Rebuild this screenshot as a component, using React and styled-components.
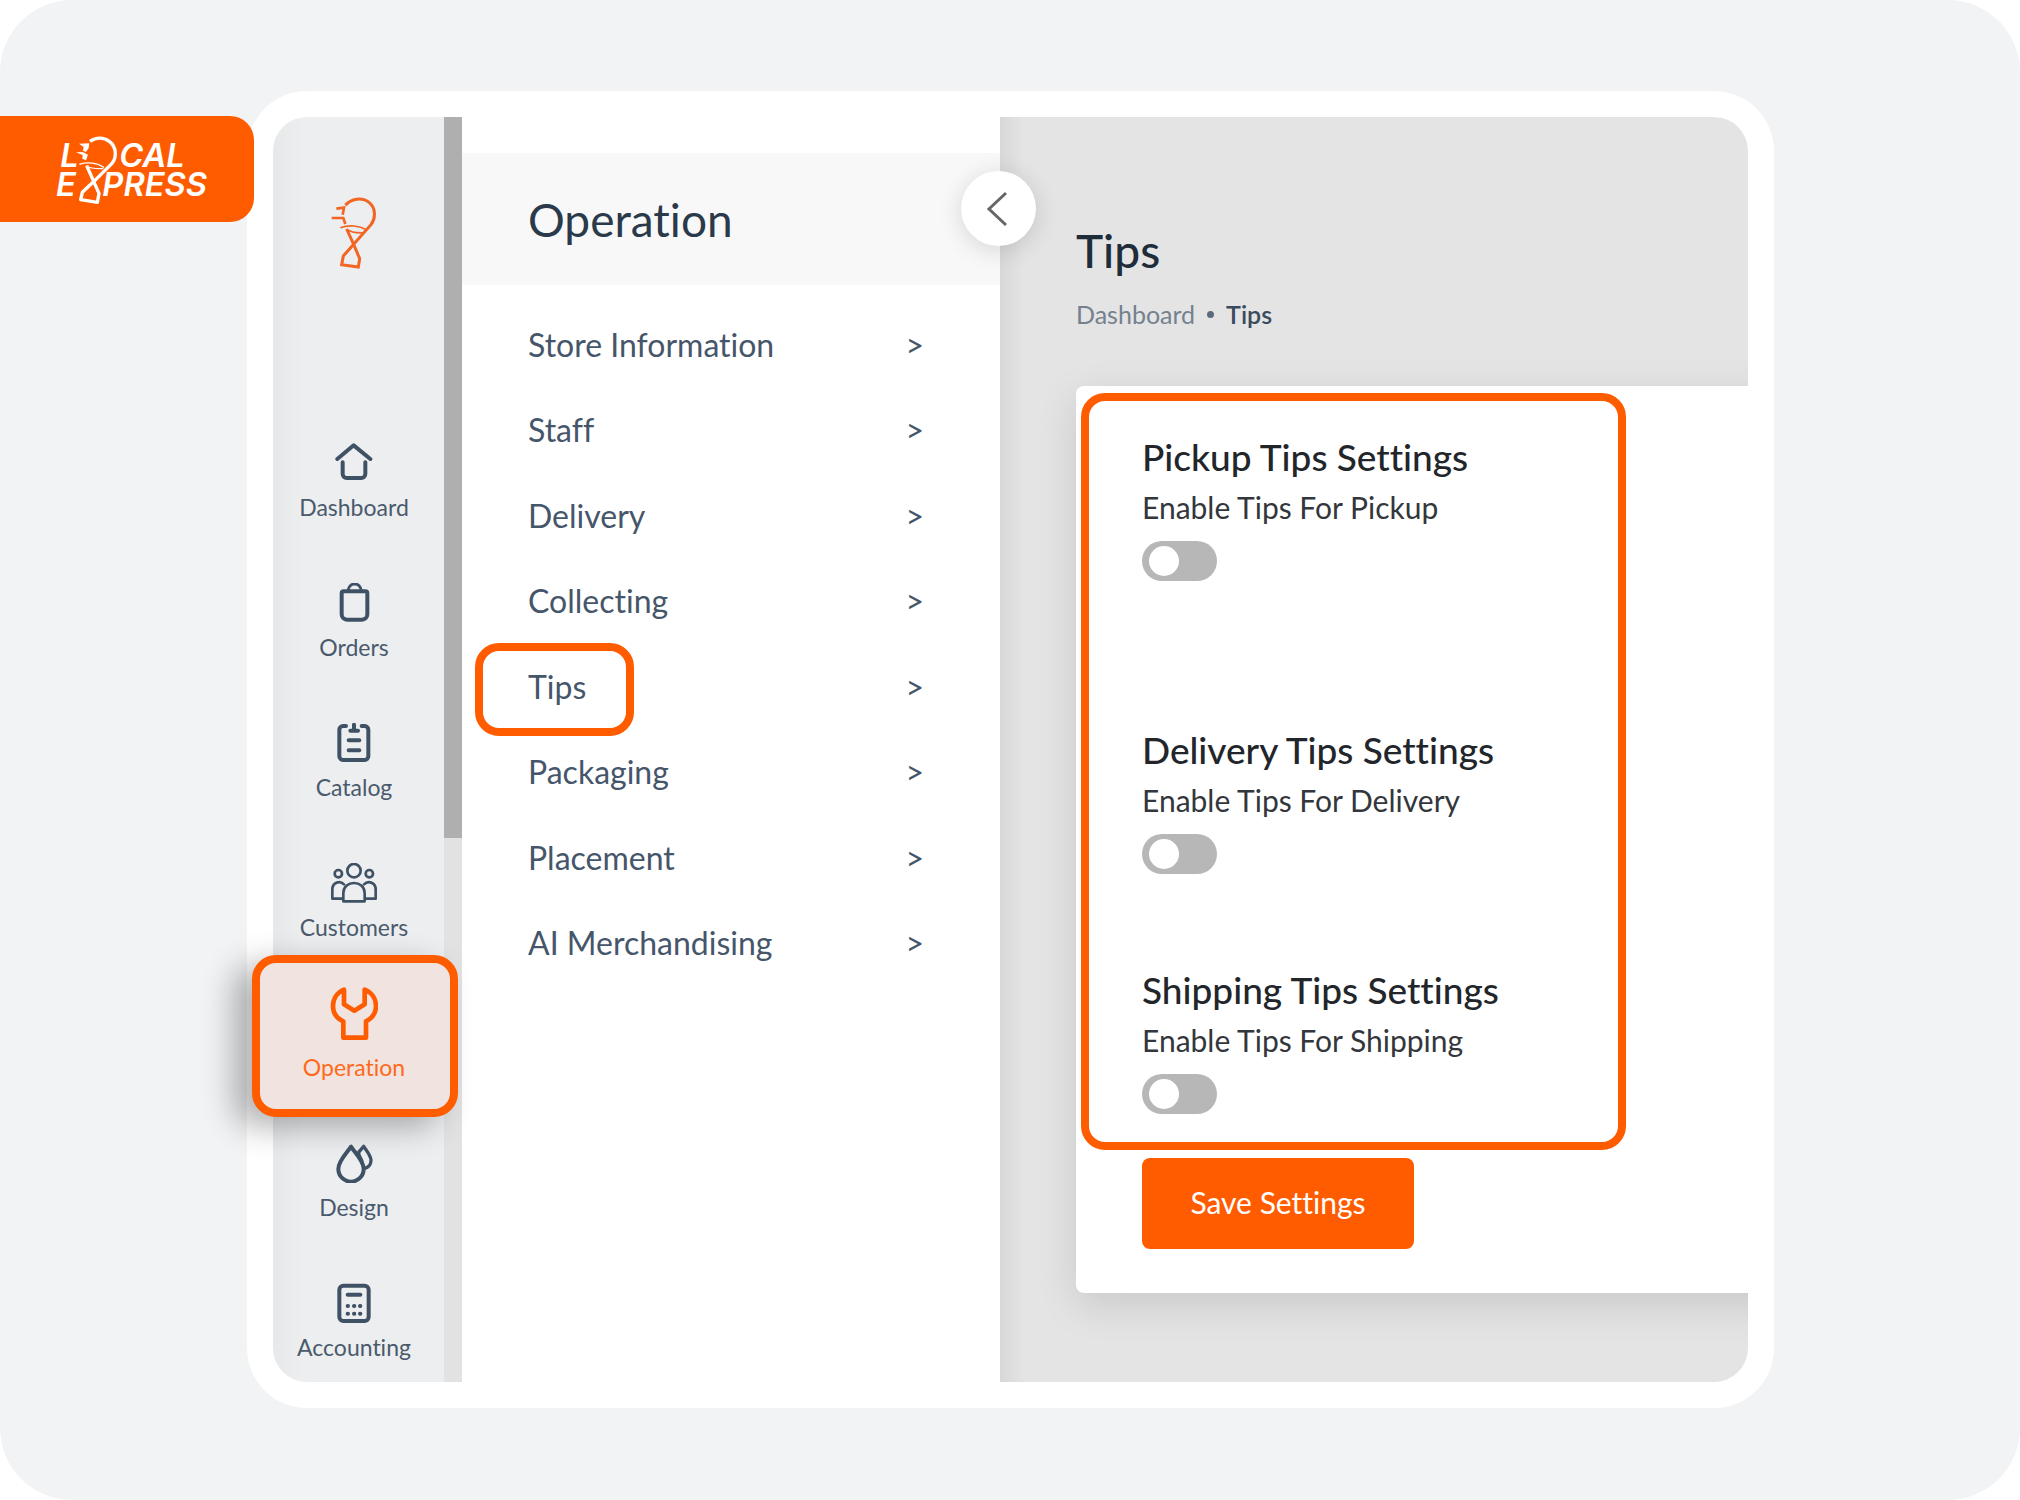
import React, { useState } from 'react';
import styled, { createGlobalStyle } from 'styled-components';

const GlobalStyle = createGlobalStyle`
  * {
    box-sizing: border-box;
  }

  body {
    margin: 0;
    background: white;
    font-family: Lato, 'Open Sans', sans-serif;
    font-variant-ligatures: none;
  }
`;

const Stage = styled.div`
  position: relative;
  min-height: 100vh;
  padding: 91px 246px 91px 247px;
  background: #f2f3f5;
  border-radius: 72px;
`;

const BrandTag = styled.div`
  position: absolute;
  top: 116px;
  left: 0;
  z-index: 3;
  width: 254px;
  height: 106px;
  background: #ff5c00;
  border-radius: 0 24px 24px 0;

  svg {
    display: block;
  }
`;

const Frame = styled.main`
  display: flex;
  padding: 26px;
  background: white;
  border-radius: 60px;
`;

const Rail = styled.nav`
  position: relative;
  z-index: 2;
  flex: 0 0 171px;
  padding: 80px 9px 0 0;
  background: linear-gradient(to right, #e6e8e9, #edeef0 30px);
  border-radius: 34px 0 0 34px;
`;

const RailLogo = styled.a`
  display: flex;
  justify-content: center;
  height: 220px;
`;

const RailItem = styled.a`
  position: relative;
  display: flex;
  flex-direction: column;
  align-items: center;
  height: 140px;
  font-size: 23px;
  line-height: 28px;
  text-decoration: none;
  color: ${props => props.$active ? '#ff6a1a' : '#4a5a6c'};

  &:last-child {
    height: 120px;
  }

  ${props => props.$active && `
    &::before {
      content: '';
      position: absolute;
      inset: -22px -23px 0 -21px;
      background: #f1e3e0;
      border: 8px solid #ff5c00;
      border-radius: 24px;
      box-shadow: -18px 10px 32px rgba(0, 0, 0, 0.3);
    }
  `}
`;

const RailIcon = styled.span`
  position: relative;
  display: flex;
  align-items: flex-end;
  height: 66px;
  margin-bottom: 10px;

  svg {
    fill: none;
    stroke: ${props => props.$active ? '#ff5c00' : '#3f5165'};
    stroke-width: 12;
    stroke-linecap: round;
    stroke-linejoin: round;
  }
`;

const RailLabel = styled.span`
  position: relative;
`;

const ScrollTrack = styled.div`
  flex: 0 0 18px;
  background: #e2e2e2;
`;

const ScrollThumb = styled.div`
  height: 57%;
  background: #afafaf;
`;

const Panel = styled.section`
  position: relative;
  z-index: 1;
  flex: 0 0 538px;
  padding-top: 36px;
  background: white;
`;

const PanelHeader = styled.header`
  display: flex;
  align-items: center;
  height: 132px;
  padding: 0 66px;
  background: #f8f8f8;
`;

const PanelTitle = styled.h2`
  margin: 0;
  font-size: 46px;
  font-weight: 400;
  color: #2b3a4a;
`;

const CollapseButton = styled.button`
  position: absolute;
  top: 54px;
  right: -36px;
  display: flex;
  align-items: center;
  justify-content: center;
  width: 75px;
  height: 75px;
  padding: 0 4px 0 0;
  background: white;
  border: none;
  border-radius: 50%;
  box-shadow: 0 4px 24px rgba(0, 0, 0, 0.14);
  cursor: pointer;
`;

const Menu = styled.div`
  display: grid;
  grid-auto-rows: 1fr;
  min-height: 684px;
  margin-top: 17px;
`;

const MenuItem = styled.a`
  display: flex;
  align-items: center;
  justify-content: space-between;
  padding: 0 76px 0 66px;
  font-size: 32px;
  line-height: 36px;
  color: #46566a;
  text-decoration: none;
`;

const MenuLabel = styled.span`
  position: relative;

  ${props => props.$marked && `
    &::after {
      content: '';
      position: absolute;
      inset: -26px -48px -31px -53px;
      border: 8px solid #ff5c00;
      border-radius: 24px;
    }
  `}
`;

const Content = styled.section`
  flex: 1;
  min-width: 0;
  padding: 106px 0 89px 76px;
  overflow: hidden;
  background: linear-gradient(to right, #d8d8d8, #e4e4e4 24px);
  border-radius: 0 34px 34px 0;
`;

const PageTitle = styled.h1`
  margin: 0;
  font-size: 46px;
  font-weight: 500;
  line-height: 56px;
  color: #1f2c3a;
`;

const Breadcrumb = styled.div`
  display: flex;
  align-items: center;
  gap: 12px;
  margin: 19px 0 56px;
  font-size: 25px;
  line-height: 32px;
  color: #3b4b5e;

  a {
    color: #74818e;
    text-decoration: none;
  }

  strong {
    font-weight: 600;
  }
`;

const Dot = styled.span`
  width: 7px;
  height: 7px;
  background: #5c6b7a;
  border-radius: 50%;
`;

/* runs past the right edge, where the content area cuts it off */
const Card = styled.form`
  margin-right: -60px;
  padding: 7px 65px 44px 5px;
  background: white;
  border-radius: 8px;
  box-shadow: 0 12px 40px rgba(0, 0, 0, 0.12);
`;

const SettingsBox = styled.div`
  width: 545px;
  max-width: 100%;
  padding: 34px 53px 28px;
  border: 8px solid #ff5c00;
  border-radius: 24px;
`;

const Setting = styled.div`
  height: ${props => props.$height}px;
`;

const SettingTitle = styled.h3`
  margin: 0 0 10px;
  font-size: 37px;
  font-weight: 500;
  line-height: 44px;
  white-space: nowrap;
  color: #22262b;
`;

const SettingLabel = styled.label`
  display: block;
  margin-bottom: 16px;
  font-size: 30px;
  line-height: 36px;
  color: #33373c;
`;

const Toggle = styled.input`
  appearance: none;
  display: block;
  width: 75px;
  height: 40px;
  margin: 0;
  padding: 5px 7px;
  background: ${props => props.checked ? '#ff5c00' : '#b7b7b7'};
  border-radius: 20px;
  cursor: pointer;

  &::before {
    content: '';
    display: block;
    width: 30px;
    height: 30px;
    margin-left: ${props => props.checked ? '31px' : '0'};
    background: white;
    border-radius: 50%;
  }
`;

const SaveButton = styled.button`
  display: block;
  width: 272px;
  height: 91px;
  margin: 8px 0 0 61px;
  padding: 0 0 4px;
  background: #ff5c00;
  border: none;
  border-radius: 8px;
  font-family: inherit;
  font-size: 30px;
  font-variant-ligatures: none;
  color: white;
  cursor: pointer;
`;

const BrandLogo = () => (
  <svg width="254" height="106" viewBox="0 108 762 318" role="img" aria-label="Local Express">
    <g fill="white" fontFamily="Inter, sans-serif" fontWeight="600" fontStyle="italic" fontSize="98">
      <text x="181" y="261">L</text>
      <text x="358" y="261">CAL</text>
      <text x="168" y="347">E</text>
      <text x="307" y="347">PRESS</text>
    </g>
    <g fill="none" stroke="white" strokeWidth="10" strokeLinejoin="round">
      <path d="M270 184C287 171 312 171 328 184C351 202 350 233 336 250L282 304L247 337L242 359L292 367L297 340L260 257" />
      <path d="M238 253C265 244 294 250 312 262M258 258C276 268 295 266 310 266" strokeWidth="4" />
    </g>
    <path d="M237 191L268 190L266 204L258 216L249 212L251 201ZM228 217L248 216L264 224L258 241L247 236L248 225Z" fill="white" />
  </svg>
);

const LampLogo = () => (
  <svg width="46" height="72" viewBox="992 350 138 216" fill="none" stroke="#f26522" strokeWidth="9">
    <path d="M1035 375C1052 355 1085 349 1107 367C1126 383 1127 413 1112 433L1060 492L1029 527L1024 553L1074 560L1078 535L1060 492L1039 446" />
    <path d="M1008 385L1031 382L1027 403M994 413H1029L1035 431" strokeWidth="8" />
    <path d="M1020 442C1045 433 1078 436 1098 448M1040 447C1055 459 1077 457 1092 458" strokeWidth="5" />
  </svg>
);

const icons = {
  dashboard: (
    <>
      <path d="M22 48L71 7L121 48" />
      <path d="M38 58v35a12 12 0 0 0 12 12h44a12 12 0 0 0 12-12v-35" />
    </>
  ),
  orders: (
    <>
      <path d="M41 25h65a6 6 0 0 1 6 6v63a16 16 0 0 1-16 16H51a16 16 0 0 1-16-16V31a6 6 0 0 1 6-6Z" />
      <path d="M54 24C56-4 92-4 94 24" strokeWidth="9" />
    </>
  ),
  catalog: (
    <>
      <path d="M48 9h-9a11 11 0 0 0-11 11v80a11 11 0 0 0 11 11h65a11 11 0 0 0 11-11V20a11 11 0 0 0-11-11h-9" />
      <path d="M72 5v17M61 23h23M56 52h32M56 82h32" />
    </>
  ),
  customers: (
    <g strokeWidth="8">
      <circle cx="72" cy="23" r="20" />
      <circle cx="25" cy="32" r="11" />
      <circle cx="118" cy="32" r="11" />
      <path d="M40 115V90C40 50 104 50 104 90V115Z" />
      <path d="M38 107H7V80C7 56 31 53 42 64M106 107H137V80C137 56 113 53 102 64" />
    </g>
  ),
  operation: (
    <path
      d="M42 8C22 16 9 35 9 57C9 79 22 95 40 103V152H108V103C126 94 138 78 138 57C138 35 125 16 104 8V52L73 71L42 52Z"
      strokeWidth="14"
    />
  ),
  design: (
    <>
      <path d="M63 11C51 30 25 53 25 78a38 38 0 0 0 76 0C101 53 75 30 63 11Z" />
      <path d="M85 29L101 10C111 25 123 38 123 52C123 65 115 74 104 76" strokeWidth="10" />
      <path d="M88 32C88 40 98 47 99 62" strokeWidth="7" />
    </>
  ),
  accounting: (
    <>
      <rect x="28" y="8" width="88" height="106" rx="12" />
      <path d="M53 35h38" />
      <path d="M53 69h1M72 69h1M90 69h1M53 92h1M72 92h1M90 92h1" strokeWidth="12" />
    </>
  )
};

const railItems = [
  { id: 'dashboard', label: 'Dashboard' },
  { id: 'orders', label: 'Orders' },
  { id: 'catalog', label: 'Catalog' },
  { id: 'customers', label: 'Customers' },
  { id: 'operation', label: 'Operation' },
  { id: 'design', label: 'Design' },
  { id: 'accounting', label: 'Accounting' }
];

const menuItems = [
  'Store Information',
  'Staff',
  'Delivery',
  'Collecting',
  'Tips',
  'Packaging',
  'Placement',
  'AI Merchandising'
];

const settings = [
  { id: 'pickup', name: 'Pickup', height: 293 },
  { id: 'delivery', name: 'Delivery', height: 240 },
  { id: 'shipping', name: 'Shipping', height: 146 }
];

const App = () => {
  const [enabled, setEnabled] = useState({
    pickup: false,
    delivery: false,
    shipping: false
  });

  const handleToggle = (e) => {
    const { name, checked } = e.target;
    setEnabled(prev => ({
      ...prev,
      [name]: checked
    }));
  };

  const handleSubmit = (e) => {
    e.preventDefault();
  };

  return (
    <>
      <GlobalStyle />
      <Stage>
        <BrandTag>
          <BrandLogo />
        </BrandTag>

        <Frame>
          <Rail>
            <RailLogo href="#home" aria-label="Home">
              <LampLogo />
            </RailLogo>
            {railItems.map(({ id, label }) => {
              const active = id === 'operation';
              return (
                <RailItem key={id} href={`#${id}`} $active={active}>
                  <RailIcon $active={active}>
                    <svg
                      width="48"
                      height={active ? 56 : 40}
                      viewBox={active ? '0 0 144 168' : '0 0 144 120'}
                    >
                      {icons[id]}
                    </svg>
                  </RailIcon>
                  <RailLabel>{label}</RailLabel>
                </RailItem>
              );
            })}
          </Rail>

          <ScrollTrack>
            <ScrollThumb />
          </ScrollTrack>

          <Panel>
            <PanelHeader>
              <PanelTitle>Operation</PanelTitle>
            </PanelHeader>
            <CollapseButton type="button" aria-label="Collapse menu">
              <svg width="24" height="36" viewBox="0 0 24 36" fill="none" stroke="#666" strokeWidth="3">
                <path d="M21 2L4 18L21 34" />
              </svg>
            </CollapseButton>
            <Menu>
              {menuItems.map(item => (
                <MenuItem key={item} href="#menu">
                  <MenuLabel $marked={item === 'Tips'}>{item}</MenuLabel>
                  <span>&gt;</span>
                </MenuItem>
              ))}
            </Menu>
          </Panel>

          <Content>
            <PageTitle>Tips</PageTitle>
            <Breadcrumb>
              <a href="#dashboard">Dashboard</a>
              <Dot />
              <strong>Tips</strong>
            </Breadcrumb>

            <Card onSubmit={handleSubmit}>
              <SettingsBox>
                {settings.map(({ id, name, height }) => (
                  <Setting key={id} $height={height}>
                    <SettingTitle>{name} Tips Settings</SettingTitle>
                    <SettingLabel htmlFor={id}>Enable Tips For {name}</SettingLabel>
                    <Toggle
                      type="checkbox"
                      id={id}
                      name={id}
                      checked={enabled[id]}
                      onChange={handleToggle}
                    />
                  </Setting>
                ))}
              </SettingsBox>
              <SaveButton type="submit">Save Settings</SaveButton>
            </Card>
          </Content>
        </Frame>
      </Stage>
    </>
  );
};

export default App;
